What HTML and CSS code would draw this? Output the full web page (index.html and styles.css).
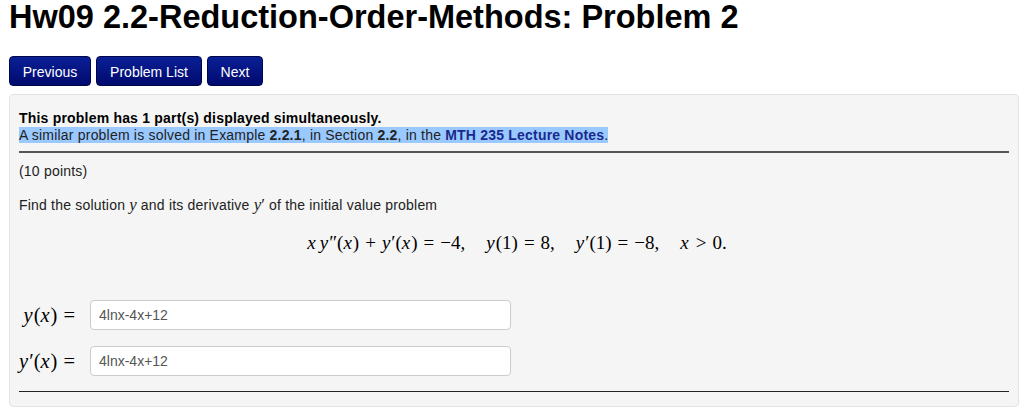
FILE: index.html
```html
<!DOCTYPE html>
<html>
<head>
<meta charset="utf-8">
<link rel="stylesheet" href="styles.css">
</head>
<body>
<h1 class="title">Hw09 2.2-Reduction-Order-Methods: Problem 2</h1>
<div class="nav">
  <a class="btn">Previous</a>
  <a class="btn">Problem List</a>
  <a class="btn">Next</a>
</div>
<div class="panel">
  <div class="intro">
    <div class="bold">This problem has 1 part(s) displayed simultaneously.</div>
    <div><span class="sel">A similar problem is solved in Example <b>2.2.1</b>, in Section <b>2.2</b>, in the <a class="link">MTH 235 Lecture Notes</a>.</span></div>
  </div>
  <hr class="rule">
  <p class="points">(10 points)</p>
  <p class="q">Find the solution <span class="m">y</span> and its derivative <span class="m">y</span><span class="mr">′</span> of the initial value problem</p>
  <div class="eq"><span class="m thin">x</span><span class="m">y</span><span class="mr">″</span><span class="mr">(</span><span class="m">x</span><span class="mr">)</span><span class="op">+</span><span class="m">y</span><span class="mr">′</span><span class="mr">(</span><span class="m">x</span><span class="mr">)</span><span class="op">=</span><span class="mr">−4,</span><span class="sp"></span><span class="m">y</span><span class="mr">(1)</span><span class="op">=</span><span class="mr">8,</span><span class="sp"></span><span class="m">y</span><span class="mr">′</span><span class="mr">(1)</span><span class="op">=</span><span class="mr">−8,</span><span class="sp"></span><span class="m">x</span><span class="op">&gt;</span><span class="mr">0.</span></div>
  <div class="answers">
    <div class="row">
      <div class="lbl"><span class="m">y</span><span class="mr">(</span><span class="m">x</span><span class="mr">)</span><span class="op">=</span></div>
      <input class="field" type="text" value="4lnx-4x+12">
    </div>
    <div class="row">
      <div class="lbl"><span class="m">y</span><span class="mr">′</span><span class="mr">(</span><span class="m">x</span><span class="mr">)</span><span class="op">=</span></div>
      <input class="field" type="text" value="4lnx-4x+12">
    </div>
  </div>
  <hr class="rule2">
</div>
</body>
</html>
```

FILE: styles.css
```css
html, body {
  margin: 0;
  padding: 0;
  background: #fff;
}
body {
  padding: 0 5px 0 9px;
  font-family: "Liberation Sans", Arial, sans-serif;
  font-size: 14px;
  letter-spacing: 0.2px;
  color: #222;
}
.title {
  margin: 0;
  padding-top: 0;
  font-size: 32.5px;
  line-height: 35px;
  font-weight: bold;
  letter-spacing: 0;
  color: #000;
}
.nav {
  display: flex;
  gap: 5px;
  margin-top: 21px;
}
.btn {
  display: inline-block;
  height: 30px;
  line-height: 30px;
  padding: 0;
  text-align: center;
  font-size: 14px;
  letter-spacing: 0;
  color: #fff;
  background: linear-gradient(#0a1f96, #000a6e);
  border: 1px solid #00064a;
  border-radius: 4px;
  box-sizing: border-box;
}
.btn:nth-child(1) { width: 82px; }
.btn:nth-child(2) { width: 106px; }
.btn:nth-child(3) { width: 56px; }
.panel {
  margin-top: 8px;
  background: #f5f5f5;
  border: 1px solid #e3e3e3;
  border-radius: 4px;
  padding: 12px 9px 16px 9px;
  height: 313px;
  box-sizing: border-box;
}
.intro {
  line-height: 17px;
  padding-top: 3px;
  color: #000;
}
.bold { font-weight: bold; }
.sel {
  background: #99c9ff;
  color: #222;
}
.link {
  color: #1a2a8c;
  font-weight: bold;
}
.rule {
  margin: 7px 0 0 0;
  border: 0;
  border-top: 2px solid #555;
}
.points {
  margin: 10px 0 0 0;
  line-height: 17px;
}
.q {
  margin: 16px 0 0 0;
  line-height: 17px;
}
.m {
  font-family: "Liberation Serif", "DejaVu Serif", serif;
  font-style: italic;
  font-size: 17px;
  letter-spacing: 0;
}
.mr, .op {
  font-family: "Liberation Serif", "DejaVu Serif", serif;
  font-size: 17px;
  letter-spacing: 0;
}
.op { margin: 0 5px; }
.eq {
  text-align: center;
  margin-top: 18px;
  line-height: 22px;
  color: #000;
  padding-left: 6px;
}
.eq .m, .eq .mr, .eq .op { font-size: 19px; }
.eq .m { margin-right: 1px; }
.eq .op { margin: 0 6px; }
.eq .thin { margin-right: 4px; }
.sp { display: inline-block; width: 21px; }
.answers {
  margin-top: 45px;
  display: flex;
  flex-direction: column;
  gap: 16px;
}
.row {
  display: flex;
  align-items: center;
}
.lbl {
  width: 56px;
  display: flex;
  justify-content: flex-end;
  align-items: baseline;
  color: #000;
  padding-right: 15px;
  white-space: nowrap;
  flex: none;
}
.lbl .m, .lbl .mr, .lbl .op { font-size: 20.5px; }
.lbl .op { margin: 0 0 0 6px; }
.lbl .m { margin-right: 1px; }
.field {
  width: 421px;
  height: 30px;
  box-sizing: border-box;
  border: 1px solid #ccc;
  border-radius: 4px;
  background: #fff;
  padding: 0 8px;
  font-family: "Liberation Sans", Arial, sans-serif;
  font-size: 14px;
  color: #555;
  margin: 0;
}
.rule2 {
  margin: 15px 0 0 0;
  border: 0;
  border-top: 1px solid #222;
}
```
